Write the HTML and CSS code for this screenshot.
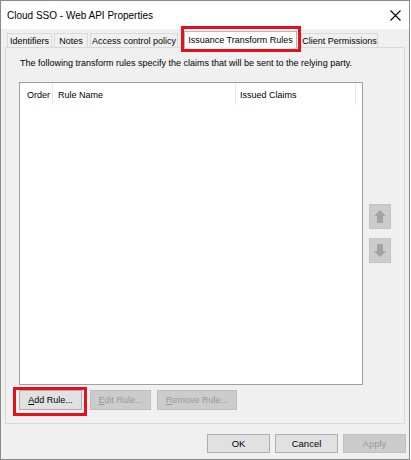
FILE: index.html
```html
<!DOCTYPE html>
<html>
<head>
<meta charset="utf-8">
<link rel="stylesheet" href="styles.css">
</head>
<body>
<div class="window">
  <div class="titlebar">
    <span class="title">Cloud SSO - Web API Properties</span>
    <svg class="close" width="11" height="11" viewBox="0 0 11 11"><path d="M0.5 0.5 L10.5 10.5 M10.5 0.5 L0.5 10.5" stroke="#000" stroke-width="1.1" fill="none"/></svg>
  </div>
  <div class="tabs">
    <div class="tab t-ident">Identifiers</div>
    <div class="tab t-notes">Notes</div>
    <div class="tab t-access">Access control policy</div>
    <div class="tab t-issue selected">Issuance Transform Rules<span class="hl hl-tab"></span></div>
    <div class="tab t-client">Client Permissions</div>
  </div>
  <div class="panel">
    <p class="desc">The following transform rules specify the claims that will be sent to the relying party.</p>
    <div class="listrow">
      <div class="list">
        <div class="header">
          <div class="col c-order">Order</div>
          <div class="col c-name">Rule Name</div>
          <div class="col c-claims">Issued Claims</div>
        </div>
      </div>
      <div class="movers">
        <div class="mover">
          <svg width="12" height="13" viewBox="0 0 12 13"><polygon points="6,0 12,6 9,6 9,13 3,13 3,6 0,6" fill="#a3a3a3"/></svg>
        </div>
        <div class="mover">
          <svg width="12" height="13" viewBox="0 0 12 13"><polygon points="6,13 12,7 9,7 9,0 3,0 3,7 0,7" fill="#a3a3a3"/></svg>
        </div>
      </div>
    </div>
    <div class="rulebtns">
      <div class="btn b-add"><span><u>A</u>dd Rule...</span><span class="hl hl-btn"></span></div>
      <div class="btn disabled b-edit"><span><u>E</u>dit Rule...</span></div>
      <div class="btn disabled b-remove"><span><u>R</u>emove Rule...</span></div>
    </div>
  </div>
  <div class="footer">
    <div class="btn fbtn">OK</div>
    <div class="btn fbtn">Cancel</div>
    <div class="btn fbtn disabled">Apply</div>
  </div>
</div>
</body>
</html>
```

FILE: styles.css
```css
html, body {
  margin: 0;
  padding: 0;
  background: #ffffff;
}
body {
  font-family: "Liberation Sans", Arial, sans-serif;
  font-size: 9px;
  color: #000;
}
.window {
  width: 410px;
  height: 460px;
  box-sizing: border-box;
  border: 1px solid #8a8a8a;
  background: #f0f0f0;
  display: flex;
  flex-direction: column;
}
.titlebar {
  height: 28px;
  flex: none;
  background: #ffffff;
  display: flex;
  align-items: center;
  padding-left: 6px;
  padding-right: 8px;
}
.title {
  font-size: 10px;
  flex: 1;
  margin-top: 1px;
}
.close {
  display: block;
  margin-top: 1px;
}
.tabs {
  height: 18px;
  flex: none;
  display: flex;
  align-items: flex-end;
  padding-left: 6px;
  position: relative;
  z-index: 2;
}
.tab {
  height: 14px;
  box-sizing: border-box;
  border: 1px solid #d9d9d9;
  border-bottom: none;
  background: #f0f0f0;
  display: flex;
  align-items: center;
  justify-content: center;
  white-space: nowrap;
  flex: none;
  padding-top: 1px;
}
.t-ident { width: 45px; margin-right: 2px; }
.t-notes { width: 34px; margin-right: 2px; }
.t-access { width: 88px; }
.t-issue { width: 113px; margin-left: 6px; }
.t-client { width: 77px; margin-left: 4px; }
.tab.selected {
  height: 17px;
  margin-bottom: -1px;
  background: #ffffff;
  border-color: #b4b4b4;
  position: relative;
  padding-top: 0;
}
.hl {
  position: absolute;
  border: 3px solid #e3101e;
  box-sizing: border-box;
  pointer-events: none;
}
.hl-tab {
  left: -4px;
  right: -5px;
  top: -6px;
  bottom: -4px;
}
.panel {
  margin-left: 4px;
  width: 400px;
  height: 377px;
  box-sizing: border-box;
  border: 1px solid #d9d9d9;
  background: #f0f0f0;
  padding: 10px 13px 0 13px;
  flex: none;
}
.desc {
  margin: 0 0 0 1px;
  height: 11px;
  line-height: 11px;
  white-space: nowrap;
}
.listrow {
  display: flex;
  margin-top: 13px;
  align-items: center;
}
.list {
  width: 344px;
  height: 303px;
  box-sizing: border-box;
  border: 1px solid #a0a0a0;
  background: #ffffff;
  flex: none;
}
.header {
  display: flex;
  height: 22px;
}
.col {
  height: 22px;
  box-sizing: border-box;
  border-right: 1px solid #e5e5e5;
  display: flex;
  align-items: center;
  flex: none;
  white-space: nowrap;
  padding-top: 1px;
}
.c-order { width: 33px; padding-left: 7px; }
.c-name { width: 183px; padding-left: 5px; }
.c-claims { width: 120px; padding-left: 4px; }
.movers {
  margin-left: 6px;
  display: flex;
  flex-direction: column;
  gap: 9px;
}
.mover {
  width: 22px;
  height: 25px;
  box-sizing: border-box;
  border: 1px solid #c4c4c4;
  background: #cccccc;
  display: flex;
  align-items: center;
  justify-content: center;
}
.rulebtns {
  display: flex;
  margin-top: 5px;
  margin-left: 0;
}
.btn {
  height: 20px;
  box-sizing: border-box;
  border: 1px solid #adadad;
  background: #e1e1e1;
  display: flex;
  align-items: center;
  justify-content: center;
  white-space: nowrap;
  flex: none;
  position: relative;
}
.btn.disabled {
  background: #cccccc;
  border-color: #bfbfbf;
  color: #9a9a9a;
}
.b-add { width: 63px; }
.b-edit { width: 61px; margin-left: 8px; }
.b-remove { width: 80px; margin-left: 6px; }
.hl-btn {
  left: -7px;
  right: -6px;
  top: -4px;
  bottom: -7px;
}
.footer {
  display: flex;
  justify-content: flex-end;
  gap: 5px;
  padding-right: 3px;
  margin-top: 10px;
}
.fbtn {
  width: 63px;
  height: 19px;
  font-size: 9.5px;
}
```
